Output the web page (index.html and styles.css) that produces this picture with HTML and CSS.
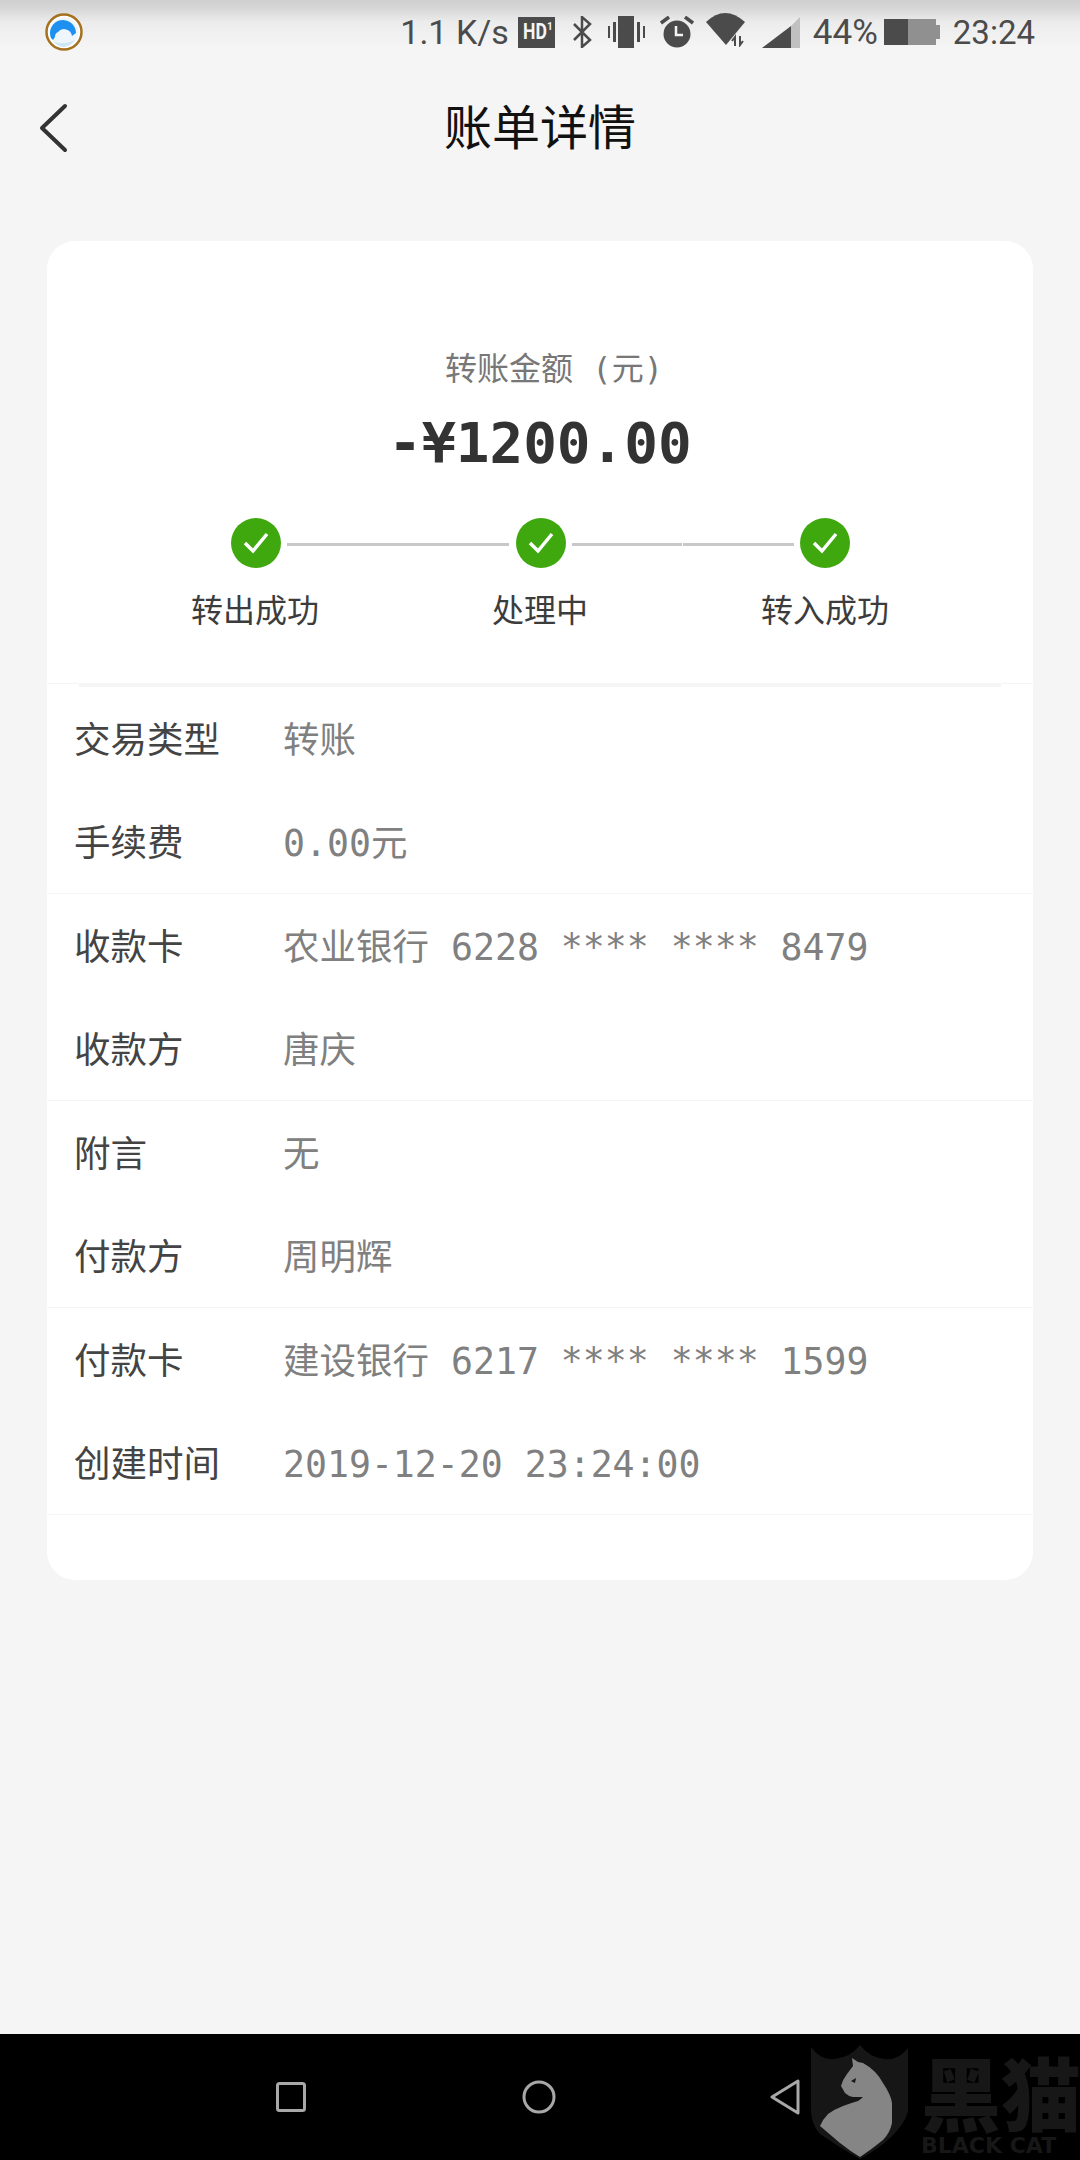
FILE: index.html
```html
<!DOCTYPE html>
<html lang="zh-CN">
<head>
    <meta charset="UTF-8">
    <meta name="viewport" content="width=device-width, initial-scale=1.0">
    <title>账单详情</title>
    <link rel="stylesheet" href="styles.css">
</head>
<body>
    <div class="status-bar">
        <svg class="app-icon" width="38" height="38" viewBox="0 0 38 38">
            <circle cx="19" cy="19" r="17.500" fill="#fff" stroke="#a5701f" stroke-width="2.500"/>
            <circle cx="19" cy="19" r="14.500" fill="#eef6fc"/>
            <path d="M6 25a13 13 0 1 1 25 -5l-4 3a8 8 0 0 0 -14 -4q-3 1 -3 5l-2 3z" fill="#1e90f0"/>
            <path d="M8 28q10 5 22 -1q-6 7 -11 7q-6 0 -11 -6z" fill="#cfe6f8"/>
        </svg>
        <div class="status-right">
            <span class="speed">1.1 K/s</span>
            <div class="hd"><span class="hd-main">HD</span><span class="hd-sup">1</span></div>
            <svg class="bt" width="21" height="32" viewBox="0 0 21 32">
                <path d="M2 8l16 16l-8 7v-30l8 7l-16 16" fill="none" stroke="#4b4b4b" stroke-width="2.500"/>
            </svg>
            <svg class="vibrate" width="37" height="32" viewBox="0 0 37 32">
                <path d="M10 0h16v32h-16zM0 10h2v12h-2zM5 6h3v20h-3zM29 6h3v20h-3zM35 10h2v12h-2z" fill="#4b4b4b"/>
            </svg>
            <svg class="alarm" width="34" height="32" viewBox="0 0 34 32">
                <circle cx="17" cy="18" r="13.500" fill="#4b4b4b"/>
                <path d="M16 10v9h7" fill="none" stroke="#f5f5f5" stroke-width="2.500"/>
                <path d="M1 7l8 -6M33 7l-8 -6" stroke="#4b4b4b" stroke-width="3.500"/>
            </svg>
            <svg class="wifi" width="41" height="34" viewBox="0 0 41 34">
                <path d="M0 9q19 -18 39 0l-19 23z" fill="#4b4b4b"/>
                <path d="M29 33v-9l-3 4M34 23v9l3 -4" fill="none" stroke="#4b4b4b" stroke-width="2"/>
            </svg>
            <svg class="signal" width="38" height="31" viewBox="0 0 38 31">
                <path d="M0 31l29 -22v22z" fill="#4b4b4b"/>
                <path d="M29 9l9 -9v31h-9z" fill="#c0c0c0"/>
            </svg>
            <span class="battery-pct">44%</span>
            <div class="battery"><div class="battery-fill"></div><div class="battery-nub"></div></div>
            <span class="clock">23:24</span>
        </div>
    </div>

    <div class="nav">
        <svg class="back" width="30" height="50" viewBox="0 0 30 50">
            <path d="M27 3l-23 22l23 22" fill="none" stroke="#333" stroke-width="4" stroke-linecap="round" stroke-linejoin="round"/>
        </svg>
        <h1>账单详情</h1>
    </div>

    <main class="card">
        <div class="summary">
            <div class="amount-label">转账金额 (元)</div>
            <div class="amount">-¥1200.00</div>
            <div class="track">
                <span class="dot"><svg width="30" height="24" viewBox="0 0 30 24"><path d="M4 12l8 8l14 -17" fill="none" stroke="#fff" stroke-width="3.500"/></svg></span>
                <span class="line line-a"></span>
                <span class="dot"><svg width="30" height="24" viewBox="0 0 30 24"><path d="M4 12l8 8l14 -17" fill="none" stroke="#fff" stroke-width="3.500"/></svg></span>
                <span class="line line-b"></span>
                <span class="line line-c"></span>
                <span class="dot"><svg width="30" height="24" viewBox="0 0 30 24"><path d="M4 12l8 8l14 -17" fill="none" stroke="#fff" stroke-width="3.500"/></svg></span>
            </div>
            <div class="step-labels">
                <span>转出成功</span>
                <span>处理中</span>
                <span>转入成功</span>
            </div>
        </div>
        <div class="thick-rule"></div>

        <section class="group">
            <div class="row"><span class="key">交易类型</span><span class="val">转账</span></div>
            <div class="row"><span class="key">手续费</span><span class="val">0.00元</span></div>
        </section>
        <section class="group">
            <div class="row"><span class="key">收款卡</span><span class="val">农业银行 6228 **** **** 8479</span></div>
            <div class="row"><span class="key">收款方</span><span class="val">唐庆</span></div>
        </section>
        <section class="group">
            <div class="row"><span class="key">附言</span><span class="val">无</span></div>
            <div class="row"><span class="key">付款方</span><span class="val">周明辉</span></div>
        </section>
        <section class="group">
            <div class="row"><span class="key">付款卡</span><span class="val">建设银行 6217 **** **** 1599</span></div>
            <div class="row"><span class="key">创建时间</span><span class="val">2019-12-20 23:24:00</span></div>
        </section>
    </main>

    <div class="softkeys">
        <svg width="30" height="30" viewBox="0 0 30 30"><rect x="1.500" y="1.500" width="27" height="27" rx="2" fill="none" stroke="#a8a8a8" stroke-width="3"/></svg>
        <svg width="34" height="34" viewBox="0 0 34 34"><circle cx="17" cy="17" r="15" fill="none" stroke="#a8a8a8" stroke-width="3"/></svg>
        <svg class="key-back" width="30" height="36" viewBox="0 0 30 36"><path d="M2 18l26 -16v32z" fill="none" stroke="#a8a8a8" stroke-width="3" stroke-linejoin="round"/></svg>

        <div class="watermark">
            <svg width="100" height="114" viewBox="0 0 100 114">
                <path d="M1 2q10 14 24 12q16 -2 25 -14q9 12 24 14q14 2 24 -11v64q-8 25 -48 47q-20 -11 -40 -25q-9 -10 -9 -24z" fill="#161616"/>
                <path d="M42 13l6 4l5 1q13 7 20 20q8 12 9 20v20q-2 10 -9 17q-11 9 -23 17q-10 -6 -20 -14l-20 -17q3 -7 8 -12q7 -5 15 -8q8 -3 15 -5q3 -2 5 -4h-10q-5 -1 -8 -4l-4 -7q2 -7 6 -12l6 -8z" fill="#858585"/>
                <path d="M41 36l5 -3l-1 5z" fill="#161616"/>
            </svg>
            <div class="wm-text">
                <div class="wm-cn">黑猫</div>
                <div class="wm-en">BLACK CAT</div>
            </div>
        </div>
    </div>
</body>
</html>
```

FILE: styles.css
```css
* {
    margin: 0;
    padding: 0;
    box-sizing: border-box;
}

html, body {
    width: 1080px;
    height: 2160px;
    overflow: hidden;
}

body {
    display: flex;
    flex-direction: column;
    background-color: #f5f5f5;
    font-family: "DejaVu Sans Mono", "Noto Sans CJK SC", monospace;
}

/* barra de estado */
.status-bar {
    height: 64px;
    flex-shrink: 0;
    display: flex;
    align-items: center;
    justify-content: space-between;
    padding: 0 45px 0 45px;
    background: linear-gradient(#cfcfcf 0, #d6d6d6 8px, #ececec 22px, #f5f5f5 48px);
    font-family: Roboto, sans-serif;
    font-size: 33px;
    color: #4b4b4b;
}

.status-right {
    display: flex;
    align-items: center;
}

.speed {
    font-size: 34px;
    margin-right: 9px;
    white-space: nowrap;
}

.hd {
    width: 37px;
    height: 31px;
    background-color: #4b4b4b;
    color: #f5f5f5;
    display: flex;
    align-items: center;
    justify-content: center;
    font-weight: 700;
    line-height: 1;
}

.hd-main {
    font-size: 22px;
    transform: scaleX(0.8);
    margin-right: -3px;
}

.hd-sup {
    font-size: 10px;
    margin-top: -10px;
}

.bt {
    margin-left: 17px;
}

.vibrate {
    margin-left: 15px;
}

.alarm {
    margin-left: 15px;
}

.wifi {
    margin-left: 12px;
    margin-top: -4px;
}

.signal {
    margin-left: 15px;
}

.battery-pct {
    font-size: 35px;
    margin-left: 13px;
}

.battery {
    margin-left: 6px;
    width: 56px;
    height: 26px;
    display: flex;
    align-items: center;
    background-color: #909090;
    background-clip: content-box;
    padding-right: 4px;
    position: relative;
}

.battery-fill {
    width: 24px;
    height: 26px;
    background-color: #4b4b4b;
}

.battery-nub {
    position: absolute;
    right: 0;
    top: 6px;
    width: 4px;
    height: 14px;
    background-color: #909090;
}

.clock {
    margin-left: 13px;
}

/* cabecera */
.nav {
    height: 128px;
    flex-shrink: 0;
    padding-bottom: 8px;
    display: flex;
    align-items: center;
    justify-content: center;
    position: relative;
}

.nav h1 {
    font-family: "Noto Sans CJK SC", sans-serif;
    font-size: 48px;
    font-weight: 400;
    color: #111;
}

.back {
    position: absolute;
    left: 38px;
    top: 39px;
}

/* tarjeta */
.card {
    width: 986px;
    height: 1339px;
    margin: 49px 0 0 47px;
    flex-shrink: 0;
    background-color: #fff;
    border-radius: 28px;
}

.summary {
    height: 443px;
    padding-top: 105px;
    display: flex;
    flex-direction: column;
    align-items: center;
    border-bottom: 1px solid #f5f5f5;
}

.amount-label {
    font-size: 32px;
    line-height: 46px;
    margin-left: 28px;
    color: #777;
}

.amount {
    margin-top: 19px;
    font-size: 56px;
    line-height: 64px;
    font-weight: 700;
    color: #333;
}

.track {
    margin-top: 43px;
    display: flex;
    align-items: center;
}

.dot {
    width: 50px;
    height: 50px;
    border-radius: 50%;
    background-color: #3fa80f;
    display: flex;
    align-items: center;
    justify-content: center;
}

.line {
    height: 3px;
    margin-top: 2px;
    background-color: #c8c8c8;
}

.line-a {
    width: 222px;
    margin-left: 6px;
    margin-right: 7px;
}

.line-b {
    width: 110px;
    margin-left: 6px;
    margin-right: 1px;
}

.line-c {
    width: 111px;
    margin-right: 6px;
}

.step-labels {
    margin-top: 20px;
    display: flex;
    width: 855px;
    font-size: 32px;
    line-height: 46px;
    color: #3c3c3c;
}

.step-labels span {
    flex: 1;
    text-align: center;
}

.thick-rule {
    height: 3px;
    margin: 0 32px;
    background-color: #f5f5f5;
}

.group {
    height: 207px;
    border-bottom: 1px solid #f5f5f5;
}

.row {
    height: 103px;
    padding: 4px 0 0 27px;
    display: flex;
    align-items: center;
    font-size: 36.500px;
    line-height: 50px;
}

.key {
    width: 209px;
    flex-shrink: 0;
    color: #444;
}

.val {
    color: #808080;
    white-space: pre;
}

/* botones del sistema */
.softkeys {
    margin-top: auto;
    height: 126px;
    flex-shrink: 0;
    background-color: #000;
    position: relative;
    display: flex;
    align-items: center;
    padding-left: 276px;
    gap: 216px;
}

.key-back {
    margin-left: -2px;
}

.watermark {
    position: absolute;
    left: 810px;
    top: 11px;
    display: flex;
    gap: 11px;
}

.wm-text {
    margin-top: 9px;
    width: 160px;
    font-family: "Noto Sans CJK SC", sans-serif;
    font-weight: 900;
    color: #171717;
}

.wm-cn {
    font-size: 80px;
    line-height: 72px;
    white-space: nowrap;
}

.wm-en {
    font-family: "DejaVu Sans", sans-serif;
    font-size: 22px;
    font-weight: 700;
    line-height: 24px;
    margin-top: 8px;
    white-space: nowrap;
}
```
